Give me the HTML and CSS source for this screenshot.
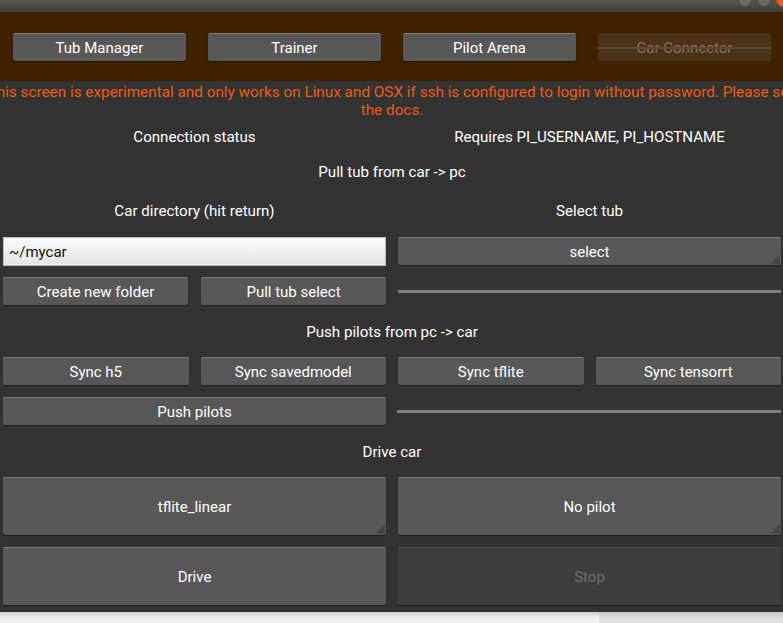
FILE: index.html
```html
<!DOCTYPE html>
<html lang="en">
<head>
    <meta charset="UTF-8">
    <title>Car Connector</title>
    <link rel="stylesheet" href="styles.css">
</head>
<body>
    <!-- Window title bar -->
    <div class="titlebar">
        <span class="win-btn"></span>
        <span class="win-btn"></span>
        <span class="win-btn close"></span>
    </div>

    <!-- Screen switcher -->
    <div class="header">
        <button class="btn">Tub Manager</button>
        <button class="btn">Trainer</button>
        <button class="btn">Pilot Arena</button>
        <button class="btn current">Car Connector</button>
    </div>

    <div class="screen">
        <div class="warn">
            <span>This screen is experimental and only works on Linux and OSX if ssh is configured to login without password. Please see</span>
            <span>the docs.</span>
        </div>

        <div class="two-col status-row">
            <div class="label">Connection status</div>
            <div class="label">Requires PI_USERNAME, PI_HOSTNAME</div>
        </div>

        <div class="label section pull-label">Pull tub from car -&gt; pc</div>

        <div class="two-col label-row dir-row">
            <div class="label">Car directory (hit return)</div>
            <div class="label">Select tub</div>
        </div>

        <div class="two-col input-row">
            <input class="text-input" type="text" value="~/mycar">
            <button class="btn spinner">select</button>
        </div>

        <div class="two-col btn-row">
            <div class="pair">
                <button class="btn">Create new folder</button>
                <button class="btn">Pull tub select</button>
            </div>
            <div class="progress"><div class="bar"></div></div>
        </div>

        <div class="label section push-label">Push pilots from pc -&gt; car</div>

        <div class="four-col btn-row">
            <button class="btn">Sync h5</button>
            <button class="btn">Sync savedmodel</button>
            <button class="btn">Sync tflite</button>
            <button class="btn">Sync tensorrt</button>
        </div>

        <div class="two-col btn-row push-row">
            <button class="btn">Push pilots</button>
            <div class="progress wide"><div class="bar"></div></div>
        </div>

        <div class="label section push-label">Drive car</div>

        <div class="two-col big-row">
            <button class="btn spinner">tflite_linear</button>
            <button class="btn spinner">No pilot</button>
        </div>

        <div class="two-col big-row last">
            <button class="btn">Drive</button>
            <button class="btn disabled">Stop</button>
        </div>
    </div>

    <div class="footer">
        <div class="foot-left"></div>
        <div class="foot-right"></div>
    </div>
</body>
</html>
```

FILE: styles.css
```css
* {
    margin: 0;
    padding: 0;
    box-sizing: border-box;
}

html, body {
    width: 100%;
    height: 100%;
    overflow: hidden;
    font-family: Roboto, "Liberation Sans", sans-serif;
    background: #333333;
}

/* Title bar */
.titlebar {
    height: 12px;
    background: linear-gradient(#56554f, #3e3d39);
    display: flex;
    justify-content: flex-end;
    gap: 5px;
    overflow: hidden;
}

.win-btn {
    width: 14px;
    height: 14px;
    margin-top: -7px;
    border-radius: 50%;
    background: #6b6a66;
    border: 1px solid #4a4945;
}

.win-btn.close {
    background: #e7602a;
    margin-right: -7px;
    border-color: #b9481c;
}

/* Header */
.header {
    height: 69px;
    background: #402100;
    display: grid;
    grid-template-columns: repeat(4, 1fr);
    column-gap: 22px;
    padding: 21px 12px 20px 13px;
}

/* Buttons */
.btn {
    position: relative;
    font-family: Roboto, "Liberation Sans", sans-serif;
    font-size: 15px;
    color: #ffffff;
    background: #585858;
    border: none;
    border-top: 1px solid #7c7c7c;
    border-radius: 2px;
    box-shadow: 0 1px 1px rgba(0, 0, 0, 0.45);
    cursor: pointer;
    height: 100%;
}

.btn.current {
    background: #4b3218;
    border-top-color: #4b3218;
    box-shadow: none;
    color: #85735f;
}

.btn.current::before {
    content: '';
    position: absolute;
    left: 0;
    right: 0;
    top: 13px;
    height: 2px;
    background: #5b4835;
}

.btn.spinner::after {
    content: '';
    position: absolute;
    right: 1px;
    bottom: 1px;
    border-style: solid;
    border-width: 0 0 10px 10px;
    border-color: transparent transparent #474747 transparent;
}

.btn.disabled {
    background: #3e3e3e;
    border-top-color: #4a4a4a;
    color: #6e6e6e;
}

/* Main screen */
.screen {
    height: 531px;
    padding: 0 2px 0 3px;
    display: flex;
    flex-direction: column;
}

.warn {
    display: flex;
    flex-direction: column;
    align-items: center;
    padding-top: 2px;
    color: #f05a12;
    font-size: 15.3px;
    line-height: 18px;
    white-space: nowrap;
}

.label {
    color: #ffffff;
    font-size: 15.1px;
    text-align: center;
    display: flex;
    align-items: center;
    justify-content: center;
}

.section {
    height: 30px;
    margin-top: 11px;
}

.two-col {
    display: grid;
    grid-template-columns: 1fr 1fr;
    column-gap: 12px;
}

.four-col {
    display: grid;
    grid-template-columns: repeat(4, 1fr);
    column-gap: 12px;
}

.status-row {
    height: 24px;
    margin-top: 6px;
}

.pull-label {
    margin-top: 8px;
}

.dir-row {
    height: 30px;
    margin-top: 9px;
}

.input-row {
    height: 29px;
    margin-top: 11px;
}

.text-input {
    font-family: Roboto, "Liberation Sans", sans-serif;
    font-size: 15px;
    color: #111111;
    background: linear-gradient(#fbfbfb, #e4e4e4);
    border: 1px solid #bdbdbd;
    padding: 0 5px;
    height: 29px;
    outline: none;
}

.input-row .btn {
    height: 28px;
}

.btn-row {
    height: 28px;
    margin-top: 11px;
}

.push-label {
    margin-top: 12px;
    height: 29px;
}

.push-row {
    margin-top: 12px;
}

.pair {
    display: grid;
    grid-template-columns: 1fr 1fr;
    column-gap: 13px;
}

.progress {
    display: flex;
    align-items: center;
}

.progress.wide {
    margin-left: -1px;
}

.bar {
    width: 100%;
    height: 3px;
    background: #7f7f7f;
}

.big-row {
    height: 58px;
    margin-top: 11px;
}

.big-row.last {
    margin-top: 12px;
}

/* Desktop below the window */
.footer {
    height: 11px;
    display: flex;
}

.foot-left {
    width: 599px;
    background: linear-gradient(#cfcfcf, #f0f0f0 60%);
}

.foot-right {
    flex: 1;
    background: linear-gradient(#c6c6c6, #e2e2e2 60%);
}
```
